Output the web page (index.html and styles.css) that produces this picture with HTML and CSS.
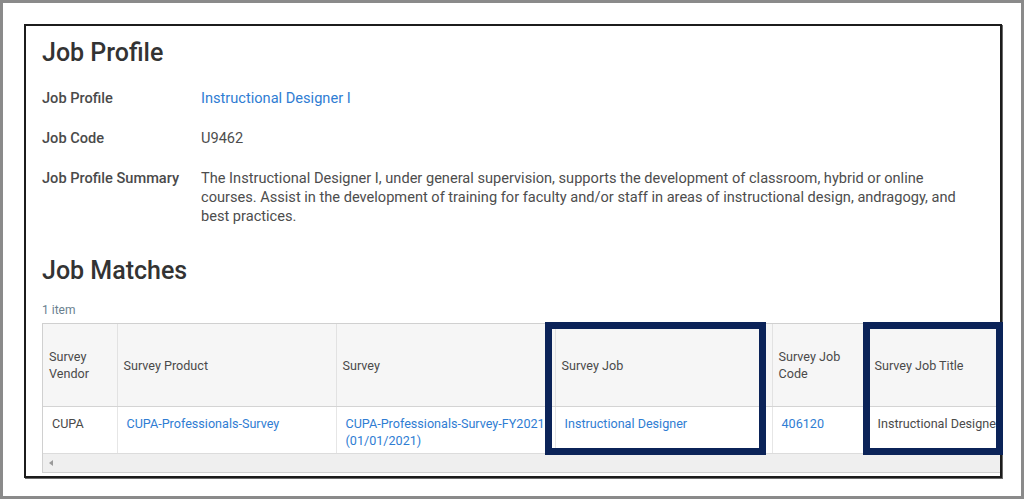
FILE: index.html
```html
<!DOCTYPE html>
<html lang="en">
<head>
<meta charset="utf-8">
<title>Job Profile</title>
<link rel="stylesheet" href="styles.css">
</head>
<body>
<div class="frame">
  <div class="card">
    <div class="card-body">
      <h1 class="title">Job Profile</h1>
      <div class="fields">
        <div class="label">Job Profile</div>
        <div class="value"><a class="link" href="#">Instructional Designer I</a></div>
        <div class="label">Job Code</div>
        <div class="value">U9462</div>
        <div class="label">Job Profile Summary</div>
        <div class="value summary">The Instructional Designer I, under general supervision, supports the development of classroom, hybrid or online courses. Assist in the development of training for faculty and/or staff in areas of instructional design, andragogy, and best practices.</div>
      </div>
      <h2 class="title section">Job Matches</h2>
      <div class="count">1 item</div>
      <div class="grid">
        <table class="grid-table">
          <colgroup>
            <col class="c-vendor"><col class="c-product"><col class="c-survey"><col class="c-job"><col class="c-code"><col class="c-title">
          </colgroup>
          <thead>
            <tr>
              <th>Survey<br>Vendor</th>
              <th>Survey Product</th>
              <th>Survey</th>
              <th>Survey Job</th>
              <th>Survey Job<br>Code</th>
              <th>Survey Job Title</th>
            </tr>
          </thead>
          <tbody>
            <tr>
              <td>CUPA</td>
              <td><a class="link" href="#">CUPA-Professionals-Survey</a></td>
              <td><a class="link" href="#">CUPA-Professionals-Survey-FY2021 (01/01/2021)</a></td>
              <td><a class="link" href="#">Instructional Designer</a></td>
              <td><a class="link" href="#">406120</a></td>
              <td class="nowrap">Instructional Designer</td>
            </tr>
          </tbody>
        </table>
        <div class="hscroll"><span class="arrow-left"></span></div>
      </div>
    </div>
    <div class="highlight hl-job"></div>
    <div class="highlight hl-title"></div>
  </div>
</div>
</body>
</html>
```

FILE: styles.css
```css
html, body {
  margin: 0;
  padding: 0;
  background: #ffffff;
}

body {
  font-family: Roboto, "Liberation Sans", Arial, sans-serif;
  color: #333333;
}

.frame {
  box-sizing: border-box;
  width: 1024px;
  height: 499px;
  border: 3px solid #8a8a8a;
  padding: 21px 19px 0 21px;
  background: #ffffff;
}

.card {
  position: relative;
  box-sizing: border-box;
  width: 978px;
  height: 454px;
  border: 2px solid #1c1c1c;
  box-shadow: 1px 1px 0 #6a6a6a;
}

.card-body {
  height: 100%;
  box-sizing: border-box;
  padding: 11px 0 0 16px;
  overflow: hidden;
}

.title {
  margin: 0;
  font-size: 25px;
  line-height: 32px;
  font-weight: 500;
  color: #333333;
}

.section {
  margin-top: 29px;
}

.fields {
  margin-top: 20px;
  display: grid;
  grid-template-columns: 159px 762px;
  row-gap: 21px;
  font-size: 14.6px;
  line-height: 19px;
}

.label {
  font-weight: 500;
  color: #4a4a4a;
}

.value {
  color: #4d4d4d;
}

.link {
  color: #2f7dd3;
  text-decoration: none;
}

.count {
  margin-top: 15px;
  font-size: 12px;
  line-height: 16px;
  color: #6a7f8f;
}

.grid {
  margin-top: 5px;
  width: 1000px;
  border: 1px solid #d0d0d0;
  overflow: hidden;
}

.grid-table {
  border-collapse: collapse;
  table-layout: fixed;
  width: 1024px;
  font-size: 12.6px;
  line-height: 17px;
}

.c-vendor { width: 74px; }
.c-product { width: 219px; }
.c-survey { width: 219px; }
.c-job { width: 217px; }
.c-code { width: 96px; }
.c-title { width: 199px; }

.grid-table th {
  height: 82px;
  padding: 0 6px;
  background: #f6f6f6;
  border-right: 1px solid #e2e2e2;
  border-bottom: 1px solid #d4d4d4;
  text-align: left;
  vertical-align: middle;
  font-weight: 400;
  color: #4a4a4a;
}

.grid-table td {
  height: 33px;
  padding: 8px 3px 4px 9px;
  border-right: 1px solid #e6e6e6;
  vertical-align: top;
  color: #4a4a4a;
}

.nowrap {
  white-space: nowrap;
  overflow: hidden;
}

.hscroll {
  height: 18px;
  background: #efefef;
  border-top: 1px solid #dcdcdc;
  display: flex;
  align-items: center;
  padding-left: 6px;
}

.arrow-left {
  width: 0;
  height: 0;
  border-top: 3px solid transparent;
  border-bottom: 3px solid transparent;
  border-right: 4px solid #9a9a9a;
}

.highlight {
  position: absolute;
  box-sizing: border-box;
  top: 296px;
  height: 133px;
  border: 7px solid #0b2358;
}

.hl-job {
  left: 519px;
  width: 221px;
}

.hl-title {
  left: 837px;
  width: 140px;
}
```
